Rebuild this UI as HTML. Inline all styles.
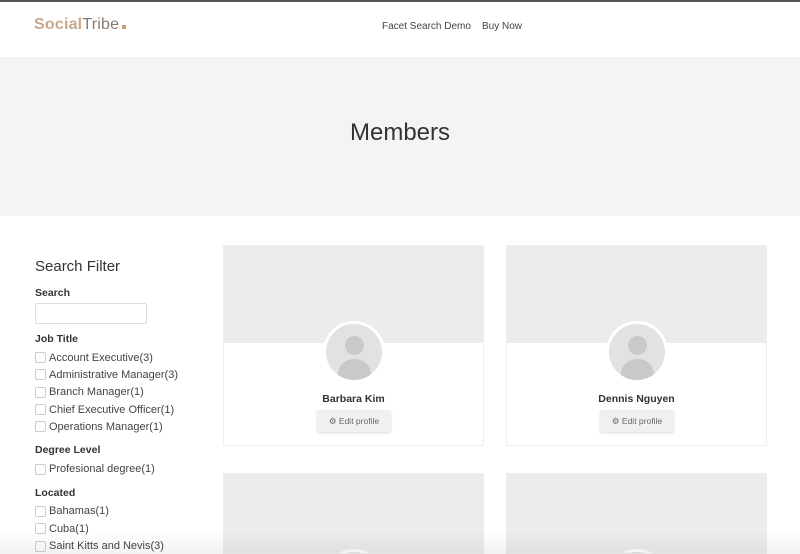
<!DOCTYPE html>
<html style="width:800px;height:554px;overflow:hidden"><head><style>
*{margin:0;padding:0;box-sizing:border-box}
body{width:800px;height:554px;overflow:hidden;background:#fff;font-family:"Liberation Sans",sans-serif;position:relative;color:#333}
.top{position:absolute;left:0;top:0;width:800px;height:2px;background:#555}
.logo{position:absolute;left:34px;top:16px;font-size:16px;font-weight:bold;color:#c8a88a;letter-spacing:0.2px}
.logo span{font-weight:normal;color:#8a7a6e}
.logo i{display:inline-block;width:4px;height:4px;background:#c8a070;margin-left:3px}
.nav{position:absolute;top:21px;font-size:10px;color:#444;white-space:nowrap}
.hero{position:absolute;left:0;top:57px;width:800px;height:159px;background:#f4f4f4}
.hero h1{position:absolute;width:800px;text-align:center;top:62px;font-size:24px;font-weight:normal;color:#333}
.side{position:absolute;left:35px;top:258px;font-size:11px;color:#444}
.side h2{font-size:15px;font-weight:normal;color:#333;margin-bottom:11px;line-height:18px}
.side b{display:block;font-size:10.5px;color:#333;margin-bottom:3px;line-height:13px}
.inp{width:112px;height:21px;border:1px solid #ddd;border-radius:2px;margin-bottom:9px}
.cb{height:17.3px;display:flex;align-items:center;white-space:nowrap}
.cb:before{content:"";width:9px;height:9px;border:1px solid #ccc;border-radius:2px;margin-right:3px}
.grp{margin-bottom:9px}
.card{position:absolute;width:261px;height:201px;border:1px solid #eee;background:#fff;overflow:hidden}
.cover{height:97px;background:#ececec}
.av{position:absolute;left:99px;top:75px;width:62px;height:62px;border-radius:50%;background:#e2e2e2;border:3px solid #fff;overflow:hidden}
.av:before{content:"";position:absolute;left:19px;top:12px;width:19px;height:19px;border-radius:50%;background:#c9c9c9}
.av:after{content:"";position:absolute;left:12px;top:35px;width:33px;height:30px;border-radius:50% 50% 0 0;background:#c9c9c9}
.nm{position:absolute;top:147px;width:100%;text-align:center;font-size:10.5px;font-weight:bold;color:#333}
.btn{position:absolute;left:93px;top:164px;width:74px;height:22px;background:#f0f0f0;border-radius:2px;box-shadow:0 1px 2px rgba(0,0,0,.15);font-size:8.5px;color:#666;text-align:center;line-height:22px}
.fade{position:absolute;left:0;top:530px;width:800px;height:24px;background:linear-gradient(rgba(0,0,0,0),rgba(0,0,0,0.05))}
</style></head><body>
<div class="top"></div>
<div class="logo">Social<span>Tribe</span><i></i></div>
<div class="nav" style="left:382px">Facet Search Demo</div>
<div class="nav" style="left:482px">Buy Now</div>
<div class="hero"><h1>Members</h1></div>
<div class="side">
<h2>Search Filter</h2>
<b>Search</b>
<div class="inp"></div>
<div class="grp"><b>Job Title</b>
<div class="cb">Account Executive(3)</div>
<div class="cb">Administrative Manager(3)</div>
<div class="cb">Branch Manager(1)</div>
<div class="cb">Chief Executive Officer(1)</div>
<div class="cb">Operations Manager(1)</div></div>
<div class="grp"><b>Degree Level</b>
<div class="cb">Profesional degree(1)</div></div>
<div class="grp"><b>Located</b>
<div class="cb">Bahamas(1)</div>
<div class="cb">Cuba(1)</div>
<div class="cb">Saint Kitts and Nevis(3)</div></div>
</div>
<div class="card" style="left:223px;top:245px"><div class="cover"></div><div class="av"></div><div class="nm">Barbara Kim</div><div class="btn">⚙ Edit profile</div></div>
<div class="card" style="left:506px;top:245px"><div class="cover"></div><div class="av"></div><div class="nm">Dennis Nguyen</div><div class="btn">⚙ Edit profile</div></div>
<div class="card" style="left:223px;top:473px;height:81px"><div class="cover"></div><div class="av"></div></div>
<div class="card" style="left:506px;top:473px;height:81px"><div class="cover"></div><div class="av"></div></div>
<div class="fade"></div>
</body></html>
